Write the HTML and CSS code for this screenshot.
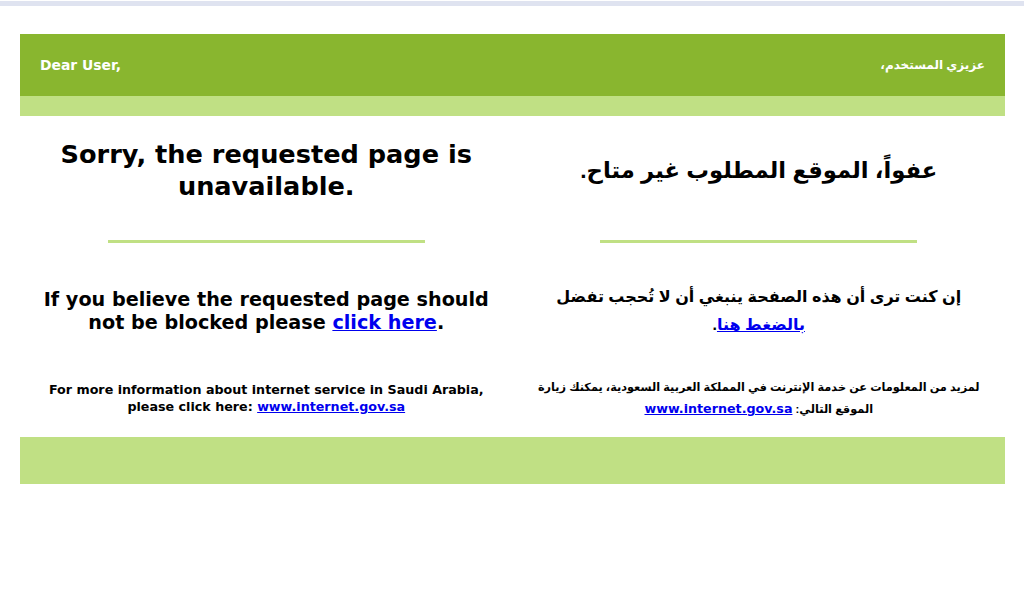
FILE: index.html
```html
<!DOCTYPE html>
<html lang="en">
<head>
    <meta charset="UTF-8">
    <title>Page unavailable</title>
    <link rel="stylesheet" href="styles.css">
</head>
<body>
    <div class="topline"></div>
    <div class="wrap">
        <!-- header -->
        <div class="head">
            <div class="greet">Dear User,</div>
            <div class="greet ar" dir="rtl">عزيزي المستخدم،</div>
        </div>
        <div class="strip"></div>
        <!-- message -->
        <div class="msg">
            <div class="cell"><h1>Sorry, the requested page is unavailable.</h1></div>
            <div class="cell ar" dir="rtl"><h1>عفواً، الموقع المطلوب غير متاح.</h1></div>
            <div class="cell"><div class="sep"></div></div>
            <div class="cell"><div class="sep"></div></div>
            <div class="cell"><p class="ask">If you believe the requested page should not be blocked please <a href="#">click here</a>.</p></div>
            <div class="cell ar" dir="rtl"><p class="ask">إن كنت ترى أن هذه الصفحة ينبغي أن لا تُحجب تفضل <a href="#">بالضغط هنا</a>.</p></div>
            <div class="cell"><p class="info">For more information about internet service in Saudi Arabia, please click here: <a href="#">www.internet.gov.sa</a></p></div>
            <div class="cell ar" dir="rtl"><p class="info">لمزيد من المعلومات عن خدمة الإنترنت في المملكة العربية السعودية، يمكنك زيارة الموقع التالي: <a href="#" class="en">www.internet.gov.sa</a></p></div>
        </div>
        <div class="foot"></div>
    </div>
</body>
</html>
```

FILE: styles.css
```css
body{
    margin: 0;
    background: #fff;
    font-family: "DejaVu Sans", Verdana, sans-serif;
    color: #000;
}
.topline{
    height: 5px;
    margin-top: 1px;
    background: #dfe3f0;
}
.wrap{
    margin: 28px 19px 0 20px;
}
/* header */
.head{
    display: flex;
    justify-content: space-between;
    align-items: center;
    height: 62px;
    padding: 0 20px;
    background: #89b62f;
}
.greet{
    color: #fff;
    font-size: 13.9px;
    font-weight: bold;
}
.greet.ar{
    font-family: "Liberation Sans", "DejaVu Sans", sans-serif;
    font-size: 12px;
}
.strip{
    height: 20px;
    background: #c0e084;
}
/* message grid */
.msg{
    display: grid;
    grid-template-columns: 1fr 1fr;
    grid-template-rows: 108px 32px 110px 64px;
    margin-bottom: 7px;
}
.cell{
    display: flex;
    align-items: center;
    justify-content: center;
    text-align: center;
    padding: 0 20px;
}
.cell.ar{
    font-family: "Liberation Sans", "DejaVu Sans", sans-serif;
}
h1{
    margin: 0;
    font-size: 25.6px;
    line-height: 32px;
}
.ar h1{
    font-size: 22.7px;
}
.sep{
    width: 317px;
    height: 3px;
    margin-top: 3px;
    background: #c0e084;
}
.ask{
    margin: 0;
    font-size: 19.2px;
    font-weight: bold;
    line-height: 23px;
}
.ar .ask{
    font-size: 16px;
    line-height: 28px;
}
.info{
    margin: 0;
    font-size: 12.7px;
    font-weight: bold;
    line-height: 17px;
}
.ar .info{
    font-size: 11.3px;
    line-height: 21px;
}
a{
    color: #0000ee;
}
.ar .en{
    font-family: "DejaVu Sans", Verdana, sans-serif;
    font-size: 12.7px;
}
.foot{
    height: 47px;
    background: #c0e084;
}
```
